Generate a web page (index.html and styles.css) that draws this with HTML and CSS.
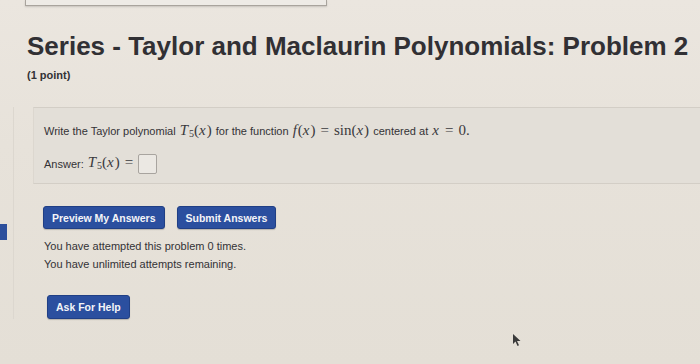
FILE: index.html
```html
<!DOCTYPE html>
<html>
<head>
<meta charset="utf-8">
<link rel="stylesheet" href="styles.css">
</head>
<body>
<div class="page">
  <div class="topbox"></div>
  <header class="head">
    <h1 class="title">Series - Taylor and Maclaurin Polynomials: Problem 2</h1>
    <div class="points">(1 point)</div>
  </header>
  <div class="main">
    <div class="side"><div class="tab"></div></div>
    <div class="content">
      <div class="problem">
        <p class="q">Write the Taylor polynomial <span class="m"><i>T</i><sub>5</sub>(<i>x</i>)</span> for the function <span class="m"><i>f</i>(<i>x</i>)<span class="eq">=</span>sin(<i>x</i>)</span> centered at <span class="m"><i>x</i><span class="eq">=</span>0.</span></p>
        <p class="ans">Answer: <span class="m"><i>T</i><sub>5</sub>(<i>x</i>)<span class="eq">=</span></span><span class="input"></span></p>
      </div>
      <div class="buttons">
        <button class="btn">Preview My Answers</button>
        <button class="btn">Submit Answers</button>
      </div>
      <div class="attempts">
        <p>You have attempted this problem 0 times.</p>
        <p>You have unlimited attempts remaining.</p>
      </div>
      <button class="btn help">Ask For Help</button>
    </div>
  </div>
  <svg class="cursor" width="10" height="14" viewBox="0 0 10 14"><path d="M1 1 L1 11 L3.5 8.5 L5.5 13 L7 12.3 L5 8 L8.5 8 Z" fill="#3a3a3a"/></svg>
</div>
</body>
</html>
```
FILE: styles.css
```css
html, body {
  margin: 0;
  padding: 0;
}
body {
  background: #e7e2da;
  font-family: "Liberation Sans", Arial, sans-serif;
  color: #333236;
  width: 700px;
  height: 364px;
  overflow: hidden;
}
.page {
  position: relative;
  height: 364px;
  background: linear-gradient(180deg, #ebe6df 0%, #e7e2da 40%, #e4dfd6 100%);
}
.topbox {
  margin-left: 25px;
  width: 300px;
  height: 5px;
  background: #eeebe6;
  border: 1px solid #a9a49d;
  border-top: none;
  box-shadow: 0 1px 2px rgba(0,0,0,0.15);
}
.head {
  padding-left: 27px;
}
.title {
  margin: 23px 0 0 0;
  font-size: 26px;
  line-height: 34px;
  font-weight: bold;
  color: #313034;
  white-space: nowrap;
}
.points {
  font-size: 11px;
  font-weight: bold;
  margin-top: 5px;
  line-height: 14px;
}
.main {
  display: flex;
  margin-top: 25px;
}
.side {
  width: 13px;
  border-right: 1px solid #dcd7cf;
  flex: none;
  padding-top: 117px;
}
.tab {
  width: 7px;
  height: 16px;
  background: #2c4f9c;
}
.content {
  flex: 1;
  padding-left: 19px;
}
.problem {
  background: #e3dfd8;
  border-top: 1px solid #d3cec6;
  border-bottom: 1px solid #d3cec6;
  border-left: 1px solid #dcd7cf;
  padding: 14px 10px 8px 10px;
  height: 53px;
}
.q, .ans {
  margin: 0;
  font-size: 11px;
  line-height: 16px;
  white-space: nowrap;
}
.ans {
  margin-top: 12px;
  display: flex;
  align-items: center;
}
.m {
  font-family: "Liberation Serif", "Times New Roman", serif;
  font-size: 15px;
  color: #3a393d;
  margin: 0 1px;
}
.m i {
  margin-right: 1px;
}
.m sub {
  font-size: 10px;
  font-style: normal;
  vertical-align: -2px;
}
.eq {
  margin: 0 5px;
}
.ans .m {
  margin-left: 4px;
}
.ans .eq {
  margin-right: 3px;
}
.input {
  display: inline-block;
  width: 17px;
  height: 18px;
  border: 1px solid #a8a49f;
  border-radius: 2px;
  background: #ebe8e3;
  margin-left: 1px;
}
.buttons {
  display: flex;
  gap: 12px;
  margin-top: 22px;
  padding-left: 10px;
}
.btn {
  font-family: "Liberation Sans", Arial, sans-serif;
  font-size: 10.5px;
  font-weight: bold;
  color: #f4f5f8;
  background: #2b4f9f;
  border: 1px solid #203f85;
  border-radius: 3px;
  height: 23px;
  padding: 0 8px;
  box-shadow: 0 1px 1px rgba(0,0,0,0.2);
}
.attempts {
  padding-left: 11px;
  margin-top: 8px;
}
.attempts p {
  margin: 0;
  font-size: 11px;
  line-height: 18px;
}
.help {
  margin-left: 14px;
  margin-top: 22px;
  height: 24px;
}
.cursor {
  position: absolute;
  left: 512px;
  top: 333px;
}
```
